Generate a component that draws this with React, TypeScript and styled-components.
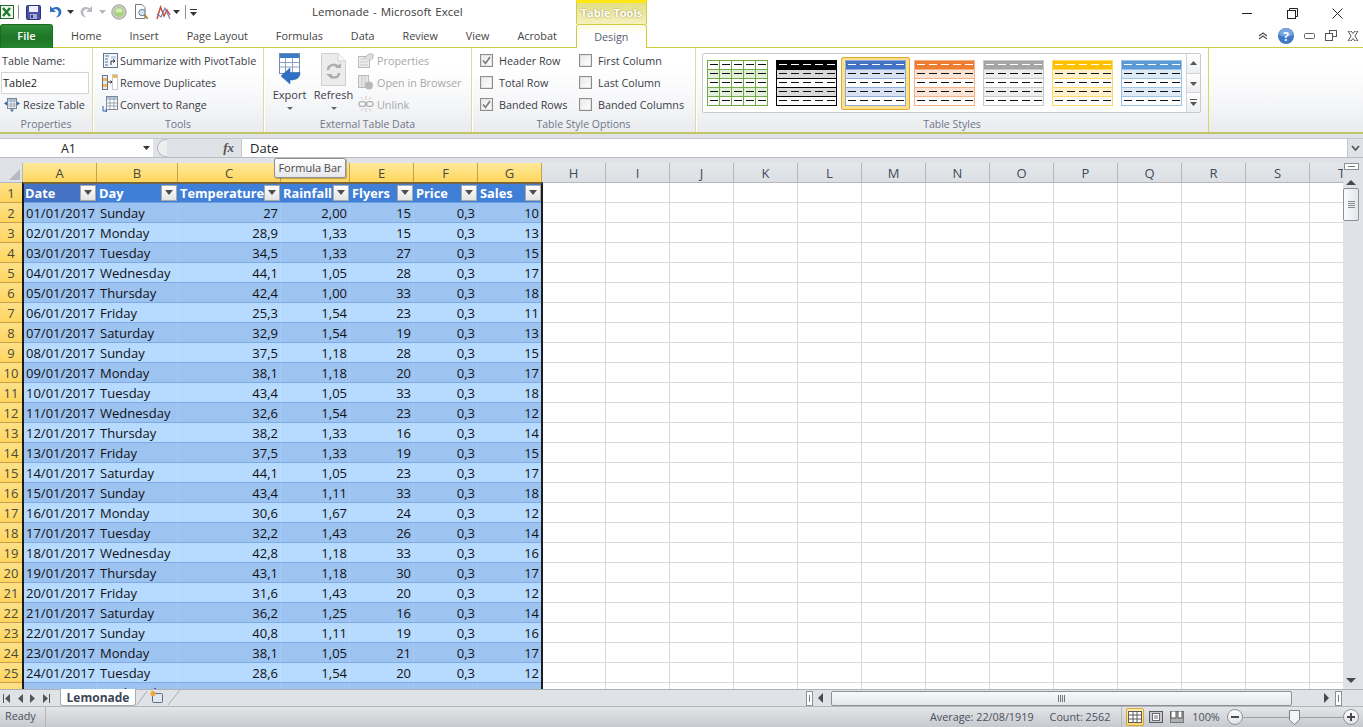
import React from 'react';
import styled, { createGlobalStyle } from 'styled-components';

const GlobalStyle = createGlobalStyle`
  html, body {
    margin: 0;
    padding: 0;
    overflow: hidden;
    background: #fff;
  }
  * {
    box-sizing: border-box;
  }
`;

const UI_FONT = `"Open Sans", "Noto Sans", "Liberation Sans", sans-serif`;

const Page = styled.div`
  position: relative;
  display: flex;
  flex-direction: column;
  width: 1363px;
  height: 727px;
  overflow: hidden;
  font-family: ${UI_FONT};
  font-size: 11px;
  color: #3b3b3b;
`;

/* title bar */
const TitleBar = styled.div`
  display: flex;
  align-items: stretch;
  height: 24px;
  flex: none;
  background: #fff;
`;

const Qat = styled.div`
  display: flex;
  align-items: center;
  width: 312px;
  flex: none;
`;

const QatItem = styled.div<{ $w: number; $ml?: number }>`
  display: flex;
  align-items: center;
  justify-content: center;
  flex: none;
  width: ${p => p.$w}px;
  margin-left: ${p => p.$ml || 0}px;
`;

const TitleText = styled.div`
  width: 264px;
  flex: none;
  font-size: 11.5px;
  line-height: 24px;
  color: #3c3c3c;
  word-spacing: 1px;
`;

const ContextTab = styled.div`
  width: 71px;
  flex: none;
  border: 1px solid #d0cc4a;
  border-width: 0 1px;
  border-top: 3px solid #ffe812;
  background: linear-gradient(#e5df85, #f4f1c0);
  color: #fff;
  font-size: 11px;
  font-weight: 700;
  text-align: center;
  line-height: 20px;
  text-shadow: 0 0 2px #8f8a30;
`;

const Spacer = styled.div`
  flex: 1;
`;

const WindowButtons = styled.div`
  display: flex;
  align-items: center;
  padding-top: 2px;
  padding-right: 20px;
  gap: 34px;
`;

/* ribbon tabs */
const TabRow = styled.div`
  display: flex;
  align-items: flex-end;
  height: 24px;
  flex: none;
  border-bottom: 1px solid #cfcb3e;
  background: #fff;
`;

const FileTab = styled.div`
  width: 53px;
  height: 24px;
  margin-bottom: -1px;
  margin-right: 4px;
  border: 1px solid #1d6b23;
  border-bottom: 0;
  border-radius: 3px 3px 0 0;
  background: linear-gradient(#2f8d35, #1e7527 55%, #25862d);
  color: #fff;
  font-weight: 600;
  font-size: 11px;
  line-height: 22px;
  text-align: center;
`;

const Tab = styled.div`
  padding: 0 14px;
  height: 23px;
  line-height: 23px;
  font-size: 10.8px;
  color: #444;
`;

const DesignTab = styled.div`
  width: 71px;
  height: 24px;
  margin-left: 5px;
  margin-bottom: -1px;
  border: 1px solid #cfcb3e;
  border-bottom: 0;
  border-radius: 3px 3px 0 0;
  background: linear-gradient(#fdfbe4, #fff 45%);
  font-size: 10.8px;
  line-height: 23px;
  text-align: center;
  color: #55606e;
`;

const MiniButtons = styled.div`
  display: flex;
  align-items: center;
  height: 23px;
  gap: 10px;
  padding-right: 4px;
`;

/* ribbon */
const Ribbon = styled.div`
  display: flex;
  height: 86px;
  flex: none;
  border-bottom: 2px solid #c3c46a;
  background: linear-gradient(#fff 25%, #f4f5f7 70%, #e9ebee);
`;

const Group = styled.div<{ $w: number; $last?: boolean }>`
  display: flex;
  flex-direction: column;
  width: ${p => p.$w}px;
  flex: none;
  border-right: 1px solid ${p => (p.$last ? '#d8d66a' : '#dcdc9e')};
  box-shadow: ${p => (p.$last ? 'none' : '1px 0 0 #fff')};
`;

const GroupBody = styled.div<{ $pl?: number }>`
  display: flex;
  flex: 1;
  min-height: 0;
  padding-top: 2px;
  padding-left: ${p => p.$pl || 0}px;
`;

const GroupLabel = styled.div`
  height: 16px;
  flex: none;
  padding-top: 1px;
  font-size: 10.5px;
  line-height: 15px;
  text-align: center;
  color: #6d7688;
`;

const Stack = styled.div<{ $w?: number }>`
  display: flex;
  flex-direction: column;
  flex: none;
  ${p => (p.$w ? `width: ${p.$w}px;` : '')}
`;

const Line = styled.div<{ $muted?: boolean; $gap?: number; $pl?: number }>`
  display: flex;
  align-items: center;
  height: 22px;
  gap: ${p => p.$gap ?? 3}px;
  padding-left: ${p => p.$pl || 0}px;
  padding-bottom: 2px;
  white-space: nowrap;
  font-size: 10.8px;
  color: ${p => (p.$muted ? '#a8a8a8' : '#3b3b46')};
`;

const IconSlot = styled.div`
  display: flex;
  align-items: center;
  justify-content: center;
  width: 16px;
  flex: none;
`;

const NameInput = styled.div`
  width: 88px;
  height: 22px;
  margin-left: 1px;
  padding-left: 1px;
  border: 1px solid #d4d4d4;
  background: #fff;
  color: #222;
  font-size: 11px;
  line-height: 20px;
`;

const BigButton = styled.div<{ $w: number }>`
  display: flex;
  flex-direction: column;
  align-items: center;
  width: ${p => p.$w}px;
  flex: none;
  font-size: 11px;
  color: #3b3b46;
`;

const BigIcon = styled.div`
  height: 33px;
  margin-top: 3px;
`;

const BigLabel = styled.div`
  line-height: 18px;
`;

const CaretDown = styled.span`
  width: 0;
  height: 0;
  margin-top: 3px;
  border: 3px solid transparent;
  border-bottom: 0;
  border-top-color: #666;
`;

const Check = styled.div`
  display: flex;
  align-items: center;
  justify-content: center;
  width: 13px;
  height: 13px;
  flex: none;
  border: 1px solid #8e8e8e;
  box-shadow: inset 0 0 0 1px #e3e3e3;
  background: linear-gradient(135deg, #e8e8e8, #fff);
`;

const Gallery = styled.div`
  display: flex;
  width: 499px;
  height: 60px;
  margin-top: 3px;
  margin-left: 6px;
  border: 1px solid #c9cacc;
  border-radius: 2px;
  background: #fff;
`;

const Thumbs = styled.div`
  display: flex;
  align-items: center;
  flex: 1;
`;

const ThumbFrame = styled.div<{ $active?: boolean }>`
  display: flex;
  align-items: center;
  justify-content: center;
  width: 69px;
  height: 53px;
  border: 1px solid ${p => (p.$active ? '#d9a93e' : 'transparent')};
  border-radius: 2px;
  background: ${p => (p.$active ? '#ffe08a' : 'transparent')};
`;

const GalleryScroll = styled.div`
  display: flex;
  flex-direction: column;
  width: 14px;
  flex: none;
  border-left: 1px solid #d3d4d6;
`;

const GalleryButton = styled.div<{ $last?: boolean }>`
  display: flex;
  align-items: center;
  justify-content: center;
  flex: 1;
  background: linear-gradient(#fff, #eceef1);
  border-bottom: ${p => (p.$last ? '0' : '1px solid #d3d4d6')};
`;

const RibbonEnd = styled.div`
  flex: 1;
`;

/* formula bar */
const FormulaGap = styled.div<{ $h: number }>`
  height: ${p => p.$h}px;
  flex: none;
  background: #dfe2e6;
`;

const FormulaBar = styled.div`
  display: flex;
  height: 20px;
  flex: none;
  background: #fff;
  border-top: 1px solid #c4c7cc;
  border-bottom: 1px solid #b9bcc1;
`;

const NameBox = styled.div`
  display: flex;
  align-items: center;
  width: 153px;
  flex: none;
  padding-right: 3px;
  background: #fff;
  font-size: 12.5px;
  color: #222;
`;

const NameBoxText = styled.div`
  flex: 1;
  text-align: center;
  padding-right: 6px;
`;

const FormulaButtons = styled.div`
  display: flex;
  align-items: center;
  width: 89px;
  flex: none;
  padding-left: 4px;
  border-right: 1px solid #c4c7cc;
  background: #dfe2e6;
`;

const Grip = styled.div`
  width: 10px;
  height: 18px;
  border: 1px solid #b5b8bd;
  border-right: 0;
  border-radius: 9px 0 0 9px;
  background: #eceef0;
`;

const FxMark = styled.div`
  margin-left: auto;
  margin-right: 7px;
  font-family: "Liberation Serif", serif;
  font-style: italic;
  font-weight: 700;
  font-size: 13px;
  color: #555;
`;

const FormulaInput = styled.div`
  flex: 1;
  padding-left: 8px;
  font-size: 13px;
  line-height: 18px;
  color: #222;
`;

const FormulaExpand = styled.div`
  display: flex;
  align-items: center;
  justify-content: center;
  width: 16px;
  margin-left: 2px;
  flex: none;
  border-left: 1px solid #c4c7cc;
  background: #dfe2e6;
`;

const TooltipBox = styled.div`
  position: absolute;
  left: 274px;
  top: 158px;
  z-index: 5;
  width: 72px;
  height: 20px;
  border: 1px solid #8f8f8f;
  border-radius: 2px;
  background: linear-gradient(#fff, #e6e7ea);
  box-shadow: 1px 1px 1px rgba(0, 0, 0, 0.25);
  font-size: 11px;
  line-height: 18px;
  text-align: center;
  white-space: nowrap;
  color: #4a4a4a;
`;

/* sheet */
const SheetArea = styled.div`
  display: flex;
  flex: 1;
  min-height: 0;
  background: #fff;
`;

const GridClip = styled.div`
  position: relative;
  flex: 1;
  overflow: hidden;
`;

const CellGrid = styled.div`
  display: grid;
  grid-template-columns: 23px 74px 81px 103px 69px 64px 64px 64px repeat(13, 64px);
  grid-auto-rows: 20px;
  width: 1400px;
`;

const Corner = styled.div`
  position: relative;
  background: #dfe2e6;
  border-right: 1px solid #b4b8bd;
  border-bottom: 1px solid #b4b8bd;

  &:after {
    content: '';
    position: absolute;
    right: 2px;
    bottom: 2px;
    border-style: solid;
    border-width: 0 0 11px 11px;
    border-color: transparent transparent #b7bbc0 transparent;
  }
`;

const ColHead = styled.div<{ $on?: boolean }>`
  border-right: 1px solid ${p => (p.$on ? '#c99f4b' : '#b4b8bd')};
  border-bottom: 1px solid ${p => (p.$on ? '#c99f4b' : '#b4b8bd')};
  background: ${p =>
    p.$on ? 'linear-gradient(#fde99c, #ffd65c)' : 'linear-gradient(#e4e7ea, #dcdfe3)'};
  font-size: 13px;
  line-height: 20px;
  text-align: center;
  color: ${p => (p.$on ? '#4a4a3a' : '#3f4a5a')};
`;

const RowHead = styled.div`
  border-right: 1px solid #c99f4b;
  border-bottom: 1px solid #c99f4b;
  background: linear-gradient(#fde08a, #ffd65c);
  font-size: 13px;
  line-height: 21px;
  text-align: center;
  color: #4a4a3a;
`;

const HeaderCell = styled.div<{ $active?: boolean }>`
  display: flex;
  align-items: center;
  justify-content: space-between;
  min-width: 0;
  padding: 0 1px 0 2px;
  background: ${p => (p.$active ? '#4472c4' : '#3f7fd8')};
  border-bottom: 1px solid #6f9fe0;
  color: #fff;
  font-size: 12.8px;
  font-weight: 700;
  white-space: nowrap;
`;

const FilterButton = styled.div`
  display: flex;
  align-items: center;
  justify-content: center;
  width: 16px;
  height: 16px;
  flex: none;
  border: 1px solid #a9a9a9;
  background: linear-gradient(#fff, #e3e3e3);
`;

const DataCell = styled.div<{ $dark: boolean; $right?: boolean }>`
  padding: 0 3px;
  background: ${p => (p.$dark ? '#9dc3f1' : '#b7daff')};
  border-bottom: 1px solid #7faae6;
  box-shadow: inset -1px 0 0 ${p => (p.$dark ? '#a5c9f3' : '#bedfff')};
  font-size: 13px;
  line-height: 21px;
  color: #111;
  white-space: nowrap;
  text-align: ${p => (p.$right ? 'right' : 'left')};
`;

const EmptyCell = styled.div`
  border-right: 1px solid #d8d8d8;
  border-bottom: 1px solid #d8d8d8;
  background: #fff;
`;

const SelectionEdge = styled.div`
  position: absolute;
  left: 22px;
  top: 19px;
  width: 521px;
  bottom: 0;
  border: 2px solid #1d1d1d;
  border-top-color: #75663f;
  border-bottom: 0;
  pointer-events: none;
`;

const VScroll = styled.div`
  display: flex;
  flex-direction: column;
  align-items: center;
  width: 20px;
  flex: none;
  padding-right: 4px;
  background: #dfe2e6;
`;

const SplitBox = styled.div<{ $wide?: boolean; $ml?: number }>`
  display: flex;
  align-items: center;
  justify-content: center;
  flex: none;
  width: ${p => (p.$wide ? 7 : 15)}px;
  height: ${p => (p.$wide ? 15 : 7)}px;
  margin-left: ${p => p.$ml || 0}px;
  border: 1px solid #8d9096;
  background: #fff;
`;

const SplitLine = styled.span<{ $wide?: boolean }>`
  display: block;
  width: ${p => (p.$wide ? 1 : 7)}px;
  height: ${p => (p.$wide ? 7 : 1)}px;
  background: #777;
`;

const ScrollArrow = styled.div<{ $dir: 'up' | 'down' | 'left' | 'right'; $ml?: number }>`
  flex: none;
  width: 0;
  height: 0;
  border: 5px solid transparent;
  ${p => (p.$ml ? `margin-left: ${p.$ml}px;` : '')}
  ${p =>
    ({
      up: 'border-top: 0; border-bottom: 5px solid #4a4a4a; margin-top: 10px;',
      down: 'border-bottom: 0; border-top: 5px solid #4a4a4a; margin-bottom: 6px;',
      left: 'border-left: 0; border-right: 5px solid #4a4a4a;',
      right: 'border-right: 0; border-left: 5px solid #4a4a4a;',
    })[p.$dir]}
`;

const VThumb = styled.div`
  display: flex;
  flex-direction: column;
  align-items: center;
  justify-content: center;
  gap: 1px;
  width: 16px;
  height: 33px;
  margin-top: 3px;
  border: 1px solid #8d9096;
  border-radius: 2px;
  background: linear-gradient(90deg, #fafbfc, #e3e6ea);
`;

const GripMark = styled.span`
  display: block;
  width: 7px;
  height: 1px;
  background: #888;
`;

const GripMarkV = styled.span`
  display: block;
  width: 1px;
  height: 7px;
  background: #777;
`;

/* sheet tabs row */
const SheetTabs = styled.div`
  display: flex;
  align-items: stretch;
  height: 17px;
  flex: none;
  background: #dfe2e6;
  border-top: 1px solid #aeb1b6;
`;

const NavArrows = styled.div`
  display: flex;
  align-items: center;
  width: 60px;
  flex: none;
  padding-left: 3px;
  gap: 7px;
`;

const ActiveSheetTab = styled.div`
  width: 76px;
  flex: none;
  margin-top: -1px;
  border: 1px solid #a9acb1;
  border-top: 0;
  border-radius: 0 0 3px 3px;
  background: #fff;
  font-size: 12px;
  font-weight: 700;
  line-height: 18px;
  text-align: center;
  color: #3c4656;
`;

const NewSheetTab = styled.div`
  display: flex;
  align-items: center;
  width: 670px;
  flex: none;
`;

const HScroll = styled.div`
  display: flex;
  align-items: center;
  flex: 1;
`;

const HThumb = styled.div`
  display: flex;
  align-items: center;
  justify-content: center;
  gap: 1px;
  width: 461px;
  height: 15px;
  margin-left: 8px;
  margin-right: 32px;
  border: 1px solid #8d9096;
  border-radius: 2px;
  background: linear-gradient(#f8f9fa, #e3e6ea);
`;

/* status bar */
const StatusBar = styled.div`
  display: flex;
  align-items: center;
  height: 21px;
  flex: none;
  border-top: 1px solid #b4b6ba;
  background: linear-gradient(#e3e5e8, #c6c9ce);
  font-size: 10.8px;
  color: #4a5160;
`;

const Ready = styled.div`
  width: 46px;
  height: 100%;
  flex: none;
  padding-left: 5px;
  line-height: 18px;
  border-right: 1px solid #b4b6ba;
`;

const StatusItem = styled.div<{ $ml?: number }>`
  margin-left: ${p => p.$ml || 0}px;
  padding-bottom: 2px;
  white-space: nowrap;
`;

const ViewButtons = styled.div`
  display: flex;
  align-items: center;
  height: 100%;
  margin-left: 11px;
  padding-left: 4px;
  gap: 3px;
  border-left: 1px solid #b4b6ba;
`;

const ViewButton = styled.div<{ $on?: boolean }>`
  display: flex;
  align-items: center;
  justify-content: center;
  width: 18px;
  height: 18px;
  border: 1px solid ${p => (p.$on ? '#d6a642' : 'transparent')};
  border-radius: 2px;
  background: ${p => (p.$on ? 'linear-gradient(#ffeda8, #ffd86a)' : 'transparent')};
`;

const Zoom = styled.div`
  width: 27px;
  margin-left: 6px;
  margin-right: 8px;
  padding-bottom: 2px;
  white-space: nowrap;
`;

const ZoomRound = styled.div`
  position: relative;
  width: 16px;
  height: 16px;
  flex: none;
  border: 1px solid #8f9298;
  border-radius: 50%;
  background: linear-gradient(#fff, #dfe1e4);

  &:before {
    content: '';
    position: absolute;
    left: 3px;
    top: 6px;
    width: 8px;
    height: 2px;
    background: #4a4a4a;
  }
`;

const ZoomPlus = styled(ZoomRound)`
  &:after {
    content: '';
    position: absolute;
    left: 6px;
    top: 3px;
    width: 2px;
    height: 8px;
    background: #4a4a4a;
  }
`;

const ZoomTrack = styled.div`
  position: relative;
  width: 100px;
  height: 1px;
  flex: none;
  background: #9ea1a6;
`;

const ZoomThumb = styled.svg`
  position: absolute;
  left: 46px;
  top: -7px;
`;

/* drawn icons */
const ExcelLogo = () => (
  <svg width="15" height="16" viewBox="0 0 15 16">
    <rect x="0.5" y="1.5" width="13" height="13" fill="#eef6ea" stroke="#1f6b2a" />
    <path d="M3 4 L10 12 M10 4 L3 12" stroke="#1f7a30" strokeWidth="2.4" />
  </svg>
);

const SaveIcon = () => (
  <svg width="15" height="15" viewBox="0 0 15 15">
    <rect x="0.5" y="0.5" width="14" height="14" rx="1" fill="#4a4fa8" stroke="#2d3080" />
    <rect x="3" y="1" width="9" height="6" fill="#eef0fa" />
    <rect x="4" y="9" width="7" height="5" fill="#a8abd0" />
    <rect x="5" y="10" width="2" height="3" fill="#333a80" />
  </svg>
);

const UndoIcon = ({ color }: { color: string }) => (
  <svg width="13" height="14" viewBox="0 0 13 14">
    <path d="M1 1 V7 H7 L4.6 4.8 C7 3.6 10 5 9.6 8 C9.3 10 8 11.5 6.5 12.6 C10 12.4 12.6 10 12.4 6.6 C12.2 2.6 7.4 0.6 3.4 3.2 Z" fill={color} />
  </svg>
);

const RedoIcon = () => (
  <svg width="13" height="14" viewBox="0 0 13 14">
    <path d="M12 1 V7 H6 L8.4 4.8 C6 3.6 3 5 3.4 8 C3.7 10 5 11.5 6.5 12.6 C3 12.4 0.4 10 0.6 6.6 C0.8 2.6 5.6 0.6 9.6 3.2 Z" fill="#b8bcc0" />
  </svg>
);

const SmallCaret = ({ color = '#333' }: { color?: string }) => (
  <svg width="7" height="4" viewBox="0 0 7 4">
    <path d="M0 0 H7 L3.5 4 Z" fill={color} />
  </svg>
);

const GreenBall = () => (
  <svg width="16" height="16" viewBox="0 0 16 16">
    <circle cx="8" cy="8" r="7.2" fill="#c9ccc4" stroke="#9ea39a" />
    <circle cx="8" cy="8" r="5" fill="#a6d27c" />
    <ellipse cx="8" cy="6.4" rx="3.4" ry="2.2" fill="#d2ecb4" />
  </svg>
);

const PreviewIcon = () => (
  <svg width="15" height="16" viewBox="0 0 15 16">
    <path d="M1.5 0.5 H8 L11 3.5 V14.5 H1.5 Z" fill="#fff" stroke="#77797c" />
    <circle cx="8" cy="8.6" r="3.2" fill="#cfe3f4" stroke="#6f7f8f" />
    <path d="M10.4 11 L13.6 14.6" stroke="#b0863c" strokeWidth="2" />
  </svg>
);

const ChartIcon = () => (
  <svg width="15" height="15" viewBox="0 0 15 15">
    <path d="M1 14 L4.5 2 L8 11 L11 5 L14 10" fill="none" stroke="#d3452f" strokeWidth="1.4" />
    <path d="M1 9 L5 12 L9 3 L14 14" fill="none" stroke="#5b7fb8" strokeWidth="1.1" />
  </svg>
);

const CustomizeIcon = () => (
  <svg width="7" height="7" viewBox="0 0 7 7">
    <rect x="0" y="0" width="7" height="1" fill="#333" />
    <path d="M0 3 H7 L3.5 7 Z" fill="#333" />
  </svg>
);

const Separator = () => (
  <svg width="1" height="14" viewBox="0 0 1 14">
    <rect width="1" height="14" fill="#8f8f8f" />
  </svg>
);

const MinimizeGlyph = () => (
  <svg width="11" height="11" viewBox="0 0 11 11">
    <rect x="0" y="5" width="10" height="1" fill="#222" />
  </svg>
);

const RestoreGlyph = () => (
  <svg width="11" height="11" viewBox="0 0 11 11">
    <path d="M2.5 2.5 V0.5 H10.5 V8.5 H8.5" fill="none" stroke="#222" />
    <rect x="0.5" y="2.5" width="8" height="8" fill="#fff" stroke="#222" />
  </svg>
);

const CloseGlyph = () => (
  <svg width="11" height="11" viewBox="0 0 11 11">
    <path d="M0.5 0.5 L10.5 10.5 M10.5 0.5 L0.5 10.5" stroke="#222" />
  </svg>
);

const CollapseIcon = () => (
  <svg width="10" height="8" viewBox="0 0 10 8">
    <path d="M1 4 L5 1 L9 4 M1 7 L5 4 L9 7" fill="none" stroke="#555" strokeWidth="1.3" />
  </svg>
);

const CollapseDown = () => (
  <svg width="9" height="7" viewBox="0 0 9 7">
    <path d="M1 1 L4.5 5 L8 1" fill="none" stroke="#555" strokeWidth="1.8" />
  </svg>
);

const HelpIcon = () => (
  <svg width="16" height="16" viewBox="0 0 16 16">
    <circle cx="8" cy="8" r="8" fill="#3f78c8" />
    <path d="M1 7 A7 7 0 0 1 15 7 Q8 10 1 7 Z" fill="#79a6e0" />
    <text x="8" y="12.5" fontSize="12" fontWeight="700" fill="#fff" textAnchor="middle" fontFamily="Open Sans">?</text>
  </svg>
);

const MiniMin = () => (
  <svg width="11" height="6" viewBox="0 0 11 6">
    <rect x="0.5" y="0.5" width="10" height="5" rx="1" fill="#fff" stroke="#666" />
  </svg>
);

const MiniRestore = () => (
  <svg width="12" height="11" viewBox="0 0 12 11">
    <rect x="4.5" y="0.5" width="7" height="6" fill="#fff" stroke="#555" />
    <rect x="0.5" y="3.5" width="7" height="7" fill="#fff" stroke="#555" />
  </svg>
);

const MiniClose = () => (
  <svg width="12" height="10" viewBox="0 0 12 10">
    <path d="M1 0 H4 L6 2.5 L8 0 H11 L8 5 L11 10 H8 L6 7.5 L4 10 H1 L4 5 Z" fill="#fff" stroke="#555" />
  </svg>
);

const SummarizeIcon = () => (
  <svg width="15" height="15" viewBox="0 0 15 15">
    <rect x="0.5" y="0.5" width="14" height="14" fill="#f3f6fa" stroke="#62748c" />
    <path d="M2 3 H6 M2 6 H5 M2 9 H5 M2 12 H5" stroke="#4e6f9e" />
    <path d="M8 3 H13 V6 H8 Z" fill="#c4d5ea" />
    <path d="M8 12 V8 H12 M10 6.5 L12 8 L10 9.5" fill="none" stroke="#333" />
  </svg>
);

const DuplicatesIcon = () => (
  <svg width="16" height="16" viewBox="0 0 16 16">
    <rect x="0.5" y="1.5" width="5" height="14" fill="#e9eef5" stroke="#68778c" />
    <rect x="1" y="4" width="4" height="3" fill="#f2b54c" />
    <rect x="1" y="10" width="4" height="3" fill="#f2b54c" />
    <rect x="10.5" y="0.5" width="5" height="15" fill="#fff" stroke="#c8ccd2" />
    <rect x="11" y="1" width="4" height="3" fill="#f2b54c" />
    <path d="M6 8 H10 M8.5 6.5 L10 8 L8.5 9.5" fill="none" stroke="#333" />
  </svg>
);

const ConvertIcon = () => (
  <svg width="16" height="16" viewBox="0 0 16 16">
    <rect x="4.5" y="0.5" width="11" height="13" fill="#fff" stroke="#7d8794" />
    <rect x="5" y="1" width="10" height="3" fill="#b4c7de" />
    <path d="M4 7 H15 M4 10 H15 M8 1 V13 M12 1 V13" stroke="#9aa3ae" />
    <path d="M1 10 V15 H5 M3.5 13.5 L5 15 L3.5 16" fill="none" stroke="#2a62b0" />
  </svg>
);

const ResizeIcon = () => (
  <svg width="16" height="15" viewBox="0 0 16 15">
    <rect x="3.5" y="1.5" width="9" height="10" fill="#fff" stroke="#7d8794" />
    <rect x="4" y="2" width="8" height="3" fill="#b4c7de" />
    <path d="M4 7 H12 M4 9 H12 M7 2 V11 M10 2 V11" stroke="#a0a8b2" />
    <path d="M0 6.5 L3 4.5 V8.5 Z M16 6.5 L13 4.5 V8.5 Z M8 15 L6 12.5 H10 Z" fill="#2a62b0" />
  </svg>
);

const ExportIcon = () => (
  <svg width="32" height="32" viewBox="0 0 32 32">
    <rect x="5.5" y="0.5" width="20" height="20" fill="#fff" stroke="#6f8db3" />
    <rect x="6" y="1" width="19" height="4" fill="#3d7ac6" />
    <path d="M6 9.5 H25 M6 14 H25 M11.5 5 V20 M18.5 5 V20" stroke="#8aa2bf" />
    <path d="M7 23 L16 15 V19.5 H26 C26 26 21 27 16 27 V31 Z" fill="#2f6fc4" stroke="#1f5aa8" strokeWidth="0.5" />
  </svg>
);

const RefreshIcon = () => (
  <svg width="25" height="33" viewBox="0 0 25 33">
    <path d="M0.5 0.5 H17 L24.5 8 V32.5 H0.5 Z" fill="#ececec" stroke="#cfcfcf" />
    <path d="M17 0.5 V8 H24.5" fill="#f8f8f8" stroke="#cfcfcf" />
    <path d="M7 17 C7 12 14 10 17 14 M18 20 C18 25 11 26 8 22" fill="none" stroke="#adadad" strokeWidth="2.4" />
    <path d="M14 15 H20 V10 Z M5 21 H11 V26 Z" fill="#adadad" />
  </svg>
);

const PropertiesIcon = () => (
  <svg width="16" height="15" viewBox="0 0 16 15">
    <rect x="0.5" y="3.5" width="11" height="11" fill="#eee" stroke="#bbb" />
    <path d="M2 6 H10 M2 9 H10 M2 12 H10" stroke="#c8c8c8" />
    <path d="M6 5 L11 1 H15 V5 L11 8" fill="#ddd" stroke="#bbb" />
  </svg>
);

const OpenBrowserIcon = () => (
  <svg width="16" height="15" viewBox="0 0 16 15">
    <rect x="0.5" y="0.5" width="10" height="12" fill="#e6e6e6" stroke="#bbb" />
    <path d="M4 1 V12 M7 1 V12" stroke="#c8c8c8" />
    <circle cx="11" cy="10.5" r="4" fill="#b8b8b8" />
  </svg>
);

const UnlinkIcon = () => (
  <svg width="16" height="16" viewBox="0 0 17 17">
    <rect x="1" y="6" width="7" height="5" rx="2.5" fill="none" stroke="#b2b2b2" strokeWidth="1.4" />
    <rect x="9" y="6" width="7" height="5" rx="2.5" fill="none" stroke="#b2b2b2" strokeWidth="1.4" />
    <path d="M8.5 0 V4 M3 1 L5.5 4 M14 1 L11.5 4 M8.5 13 V17 M3 16 L5.5 13 M14 16 L11.5 13" stroke="#c6c6c6" />
  </svg>
);

const CheckMark = () => (
  <svg width="9" height="9" viewBox="0 0 9 9">
    <path d="M1 4.5 L3.5 7.5 L8 1" fill="none" stroke="#7b7b7b" strokeWidth="1.6" />
  </svg>
);

const GalleryArrow = ({ kind }: { kind: 'up' | 'down' | 'more' }) => (
  <svg width="9" height="9" viewBox="0 0 9 9">
    {kind === 'up' && <path d="M1 6 H8 L4.5 2 Z" fill="#555" />}
    {kind === 'down' && <path d="M1 3 H8 L4.5 7 Z" fill="#555" />}
    {kind === 'more' && (
      <>
        <rect x="1" y="1" width="7" height="1" fill="#555" />
        <path d="M1 4 H8 L4.5 8 Z" fill="#555" />
      </>
    )}
  </svg>
);

const FilterCaret = () => (
  <svg width="8" height="5" viewBox="0 0 8 5">
    <path d="M0 0 H8 L4 5 Z" fill="#4d4d4d" />
  </svg>
);

const NavFirst = () => (
  <svg width="7" height="9" viewBox="0 0 7 9">
    <rect width="1" height="9" fill="#555" />
    <path d="M7 0 V9 L2 4.5 Z" fill="#555" />
  </svg>
);

const NavPrev = () => (
  <svg width="6" height="9" viewBox="0 0 6 9">
    <path d="M6 0 V9 L1 4.5 Z" fill="#555" />
  </svg>
);

const NavNext = () => (
  <svg width="6" height="9" viewBox="0 0 6 9">
    <path d="M0 0 V9 L5 4.5 Z" fill="#555" />
  </svg>
);

const NavLast = () => (
  <svg width="7" height="9" viewBox="0 0 7 9">
    <rect x="6" width="1" height="9" fill="#555" />
    <path d="M0 0 V9 L5 4.5 Z" fill="#555" />
  </svg>
);

const NewSheetIcon = () => (
  <svg width="45" height="16" viewBox="0 0 45 16">
    <path d="M1 15 L11 1 M32 15 L44 0" fill="none" stroke="#a9acb1" />
    <rect x="16.5" y="3.5" width="10" height="9" rx="1" fill="#dfe6f0" stroke="#5f6c80" />
    <circle cx="17" cy="3.5" r="2.6" fill="#f2a93c" />
  </svg>
);

const NormalViewIcon = () => (
  <svg width="14" height="12" viewBox="0 0 14 12">
    <rect x="0.5" y="0.5" width="13" height="11" fill="#fff" stroke="#5a5a5a" />
    <path d="M1 4 H13 M1 8 H13 M5 1 V11 M9 1 V11" stroke="#5a5a5a" />
  </svg>
);

const LayoutViewIcon = () => (
  <svg width="14" height="12" viewBox="0 0 14 12">
    <rect x="0.5" y="0.5" width="13" height="11" fill="#c8cacd" stroke="#5a5a5a" />
    <rect x="3.5" y="2.5" width="7" height="7" fill="#fff" stroke="#6a6a6a" />
    <path d="M5 5 H9 M5 7 H9" stroke="#6a6a6a" />
  </svg>
);

const BreakViewIcon = () => (
  <svg width="14" height="12" viewBox="0 0 14 12">
    <rect x="0.5" y="0.5" width="13" height="11" fill="#aeb0b3" stroke="#777" />
    <rect x="1" y="0" width="5" height="7" fill="#fff" stroke="#555" />
    <rect x="8" y="0" width="4" height="7" fill="#fff" stroke="#555" />
  </svg>
);

interface ThumbColors {
  line: string;
  head: string;
  band: string;
  headDash: string;
  vertical?: boolean;
}

const TableThumb = ({ line, head, band, headDash, vertical }: ThumbColors) => {
  const rows = [0, 1, 2, 3, 4];
  const dashes = [0, 1, 2, 3, 4];
  return (
    <svg width="61" height="46" viewBox="0 0 61 46">
      <rect x="0.5" y="0.5" width="60" height="45" fill="#fff" stroke={line} />
      {rows.map(r => (
        <rect
          key={r}
          x="1"
          y={1 + r * 9}
          width="59"
          height="8"
          fill={r === 0 ? head : r % 2 === 1 ? band : '#fff'}
        />
      ))}
      {[1, 2, 3, 4].map(r => (
        <rect key={r} x="1" y={r * 9} width="59" height="1" fill={line} />
      ))}
      {vertical &&
        [1, 2, 3, 4].map(c => (
          <rect key={c} x={c * 12} y="1" width="1" height="44" fill={line} />
        ))}
      {rows.map(r =>
        dashes.map(c => (
          <rect
            key={`${r}-${c}`}
            x={3 + c * 12}
            y={4 + r * 9}
            width="8"
            height="1"
            fill={r === 0 ? headDash : '#111'}
          />
        )),
      )}
    </svg>
  );
};

const THUMBS: ThumbColors[] = [
  { line: '#70ad47', head: '#fff', band: '#e2efda', headDash: '#111', vertical: true },
  { line: '#000', head: '#000', band: '#d9d9d9', headDash: '#fff' },
  { line: '#8eaadb', head: '#4472c4', band: '#d9e2f3', headDash: '#fff' },
  { line: '#f4b183', head: '#ed7d31', band: '#fbe4d5', headDash: '#fff' },
  { line: '#c9c9c9', head: '#a5a5a5', band: '#ededed', headDash: '#fff' },
  { line: '#ffd966', head: '#ffc000', band: '#fff2cc', headDash: '#fff' },
  { line: '#9cc2e5', head: '#5b9bd5', band: '#deeaf6', headDash: '#fff' },
];

const TABS = ['Home', 'Insert', 'Page Layout', 'Formulas', 'Data', 'Review', 'View', 'Acrobat'];

const COLS = ['A', 'B', 'C', 'D', 'E', 'F', 'G', 'H', 'I', 'J', 'K', 'L', 'M', 'N', 'O', 'P', 'Q', 'R', 'S', 'T'];

const HEADERS = ['Date', 'Day', 'Temperature', 'Rainfall', 'Flyers', 'Price', 'Sales'];

type Row = [string, string, string, string, string, string, string];

const ROWS: Row[] = [
  ['01/01/2017', 'Sunday', '27', '2,00', '15', '0,3', '10'],
  ['02/01/2017', 'Monday', '28,9', '1,33', '15', '0,3', '13'],
  ['03/01/2017', 'Tuesday', '34,5', '1,33', '27', '0,3', '15'],
  ['04/01/2017', 'Wednesday', '44,1', '1,05', '28', '0,3', '17'],
  ['05/01/2017', 'Thursday', '42,4', '1,00', '33', '0,3', '18'],
  ['06/01/2017', 'Friday', '25,3', '1,54', '23', '0,3', '11'],
  ['07/01/2017', 'Saturday', '32,9', '1,54', '19', '0,3', '13'],
  ['08/01/2017', 'Sunday', '37,5', '1,18', '28', '0,3', '15'],
  ['09/01/2017', 'Monday', '38,1', '1,18', '20', '0,3', '17'],
  ['10/01/2017', 'Tuesday', '43,4', '1,05', '33', '0,3', '18'],
  ['11/01/2017', 'Wednesday', '32,6', '1,54', '23', '0,3', '12'],
  ['12/01/2017', 'Thursday', '38,2', '1,33', '16', '0,3', '14'],
  ['13/01/2017', 'Friday', '37,5', '1,33', '19', '0,3', '15'],
  ['14/01/2017', 'Saturday', '44,1', '1,05', '23', '0,3', '17'],
  ['15/01/2017', 'Sunday', '43,4', '1,11', '33', '0,3', '18'],
  ['16/01/2017', 'Monday', '30,6', '1,67', '24', '0,3', '12'],
  ['17/01/2017', 'Tuesday', '32,2', '1,43', '26', '0,3', '14'],
  ['18/01/2017', 'Wednesday', '42,8', '1,18', '33', '0,3', '16'],
  ['19/01/2017', 'Thursday', '43,1', '1,18', '30', '0,3', '17'],
  ['20/01/2017', 'Friday', '31,6', '1,43', '20', '0,3', '12'],
  ['21/01/2017', 'Saturday', '36,2', '1,25', '16', '0,3', '14'],
  ['22/01/2017', 'Sunday', '40,8', '1,11', '19', '0,3', '16'],
  ['23/01/2017', 'Monday', '38,1', '1,05', '21', '0,3', '17'],
  ['24/01/2017', 'Tuesday', '28,6', '1,54', '20', '0,3', '12'],
  ['25/01/2017', 'Wednesday', '', '', '', '', ''],
];

const EMPTY_COLS = COLS.slice(7);

function Sheet() {
  return (
    <GridClip>
      <CellGrid>
        <Corner />
        {COLS.map((c, i) => (
          <ColHead key={c} $on={i < 7}>
            {c}
          </ColHead>
        ))}

        <RowHead>1</RowHead>
        {HEADERS.map((h, i) => (
          <HeaderCell key={h} $active={i === 0}>
            {h}
            <FilterButton>
              <FilterCaret />
            </FilterButton>
          </HeaderCell>
        ))}
        {EMPTY_COLS.map(c => (
          <EmptyCell key={c} />
        ))}

        {ROWS.map((row, r) => (
          <React.Fragment key={row[0]}>
            <RowHead>{r + 2}</RowHead>
            {row.map((v, c) => (
              <DataCell key={c} $dark={r % 2 === 0} $right={c > 1}>
                {v}
              </DataCell>
            ))}
            {EMPTY_COLS.map(c => (
              <EmptyCell key={c} />
            ))}
          </React.Fragment>
        ))}
      </CellGrid>
      <SelectionEdge />
    </GridClip>
  );
}

export default function App() {
  return (
    <Page>
      <GlobalStyle />
      <TitleBar>
        <Qat>
          <QatItem $w={15}>
            <ExcelLogo />
          </QatItem>
          <QatItem $w={1} $ml={3}>
            <Separator />
          </QatItem>
          <QatItem $w={15} $ml={7}>
            <SaveIcon />
          </QatItem>
          <QatItem $w={13} $ml={8}>
            <UndoIcon color="#2f6fc4" />
          </QatItem>
          <QatItem $w={7} $ml={5}>
            <SmallCaret />
          </QatItem>
          <QatItem $w={13} $ml={6}>
            <RedoIcon />
          </QatItem>
          <QatItem $w={7} $ml={6}>
            <SmallCaret color="#b5b5b5" />
          </QatItem>
          <QatItem $w={16} $ml={5}>
            <GreenBall />
          </QatItem>
          <QatItem $w={15} $ml={7}>
            <PreviewIcon />
          </QatItem>
          <QatItem $w={15} $ml={7}>
            <ChartIcon />
          </QatItem>
          <QatItem $w={7} $ml={2}>
            <SmallCaret />
          </QatItem>
          <QatItem $w={1} $ml={5}>
            <Separator />
          </QatItem>
          <QatItem $w={7} $ml={4}>
            <CustomizeIcon />
          </QatItem>
        </Qat>
        <TitleText>Lemonade - Microsoft Excel</TitleText>
        <ContextTab>Table Tools</ContextTab>
        <Spacer />
        <WindowButtons>
          <MinimizeGlyph />
          <RestoreGlyph />
          <CloseGlyph />
        </WindowButtons>
      </TitleBar>

      <TabRow>
        <FileTab>File</FileTab>
        {TABS.map(t => (
          <Tab key={t}>{t}</Tab>
        ))}
        <DesignTab>Design</DesignTab>
        <Spacer />
        <MiniButtons>
          <CollapseIcon />
          <HelpIcon />
          <MiniMin />
          <MiniRestore />
          <MiniClose />
        </MiniButtons>
      </TabRow>

      <Ribbon>
        <Group $w={93}>
          <GroupBody>
            <Stack>
              <Line $pl={2}>Table Name:</Line>
              <NameInput>Table2</NameInput>
              <Line $pl={4}>
                <IconSlot>
                  <ResizeIcon />
                </IconSlot>
                Resize Table
              </Line>
            </Stack>
          </GroupBody>
          <GroupLabel>Properties</GroupLabel>
        </Group>

        <Group $w={171}>
          <GroupBody $pl={9}>
            <Stack>
              <Line $gap={2}>
                <IconSlot>
                  <SummarizeIcon />
                </IconSlot>
                Summarize with PivotTable
              </Line>
              <Line $gap={2}>
                <IconSlot>
                  <DuplicatesIcon />
                </IconSlot>
                Remove Duplicates
              </Line>
              <Line $gap={2}>
                <IconSlot>
                  <ConvertIcon />
                </IconSlot>
                Convert to Range
              </Line>
            </Stack>
          </GroupBody>
          <GroupLabel>Tools</GroupLabel>
        </Group>

        <Group $w={208}>
          <GroupBody $pl={6}>
            <BigButton $w={39}>
              <BigIcon>
                <ExportIcon />
              </BigIcon>
              <BigLabel>Export</BigLabel>
              <CaretDown />
            </BigButton>
            <BigButton $w={49}>
              <BigIcon>
                <RefreshIcon />
              </BigIcon>
              <BigLabel>Refresh</BigLabel>
              <CaretDown />
            </BigButton>
            <Stack>
              <Line $muted>
                <IconSlot>
                  <PropertiesIcon />
                </IconSlot>
                Properties
              </Line>
              <Line $muted>
                <IconSlot>
                  <OpenBrowserIcon />
                </IconSlot>
                Open in Browser
              </Line>
              <Line $muted>
                <IconSlot>
                  <UnlinkIcon />
                </IconSlot>
                Unlink
              </Line>
            </Stack>
          </GroupBody>
          <GroupLabel>External Table Data</GroupLabel>
        </Group>

        <Group $w={224}>
          <GroupBody $pl={8}>
            <Stack $w={99}>
              <Line $gap={6}>
                <Check>
                  <CheckMark />
                </Check>
                Header Row
              </Line>
              <Line $gap={6}>
                <Check />
                Total Row
              </Line>
              <Line $gap={6}>
                <Check>
                  <CheckMark />
                </Check>
                Banded Rows
              </Line>
            </Stack>
            <Stack>
              <Line $gap={6}>
                <Check />
                First Column
              </Line>
              <Line $gap={6}>
                <Check />
                Last Column
              </Line>
              <Line $gap={6}>
                <Check />
                Banded Columns
              </Line>
            </Stack>
          </GroupBody>
          <GroupLabel>Table Style Options</GroupLabel>
        </Group>

        <Group $w={513} $last>
          <GroupBody>
            <Gallery>
              <Thumbs>
                {THUMBS.map((t, i) => (
                  <ThumbFrame key={t.line} $active={i === 2}>
                    <TableThumb {...t} />
                  </ThumbFrame>
                ))}
              </Thumbs>
              <GalleryScroll>
                <GalleryButton>
                  <GalleryArrow kind="up" />
                </GalleryButton>
                <GalleryButton>
                  <GalleryArrow kind="down" />
                </GalleryButton>
                <GalleryButton $last>
                  <GalleryArrow kind="more" />
                </GalleryButton>
              </GalleryScroll>
            </Gallery>
          </GroupBody>
          <GroupLabel>Table Styles</GroupLabel>
        </Group>
        <RibbonEnd />
      </Ribbon>

      <FormulaGap $h={4} />
      <FormulaBar>
        <NameBox>
          <NameBoxText>A1</NameBoxText>
          <SmallCaret />
        </NameBox>
        <FormulaButtons>
          <Grip />
          <FxMark>fx</FxMark>
        </FormulaButtons>
        <FormulaInput>Date</FormulaInput>
        <FormulaExpand>
          <CollapseDown />
        </FormulaExpand>
      </FormulaBar>
      <FormulaGap $h={5} />
      <TooltipBox>Formula Bar</TooltipBox>

      <SheetArea>
        <Sheet />
        <VScroll>
          <SplitBox>
            <SplitLine />
          </SplitBox>
          <ScrollArrow $dir="up" />
          <VThumb>
            <GripMark />
            <GripMark />
            <GripMark />
            <GripMark />
          </VThumb>
          <Spacer />
          <ScrollArrow $dir="down" />
        </VScroll>
      </SheetArea>

      <SheetTabs>
        <NavArrows>
          <NavFirst />
          <NavPrev />
          <NavNext />
          <NavLast />
        </NavArrows>
        <ActiveSheetTab>Lemonade</ActiveSheetTab>
        <NewSheetTab>
          <NewSheetIcon />
        </NewSheetTab>
        <HScroll>
          <SplitBox $wide>
            <SplitLine $wide />
          </SplitBox>
          <ScrollArrow $dir="left" $ml={5} />
          <HThumb>
            <GripMarkV />
            <GripMarkV />
            <GripMarkV />
            <GripMarkV />
          </HThumb>
          <ScrollArrow $dir="right" />
          <SplitBox $wide $ml={6}>
            <SplitLine $wide />
          </SplitBox>
        </HScroll>
      </SheetTabs>

      <StatusBar>
        <Ready>Ready</Ready>
        <StatusItem $ml={884}>Average: 22/08/1919</StatusItem>
        <StatusItem $ml={16}>Count: 2562</StatusItem>
        <ViewButtons>
          <ViewButton $on>
            <NormalViewIcon />
          </ViewButton>
          <ViewButton>
            <LayoutViewIcon />
          </ViewButton>
          <ViewButton>
            <BreakViewIcon />
          </ViewButton>
        </ViewButtons>
        <Zoom>100%</Zoom>
        <ZoomRound />
        <ZoomTrack>
          <ZoomThumb width="11" height="15" viewBox="0 0 11 15">
            <path d="M0.5 0.5 H10.5 V10 L5.5 14.5 L0.5 10 Z" fill="#f4f5f6" stroke="#7d8086" />
          </ZoomThumb>
        </ZoomTrack>
        <ZoomPlus />
      </StatusBar>
    </Page>
  );
}
